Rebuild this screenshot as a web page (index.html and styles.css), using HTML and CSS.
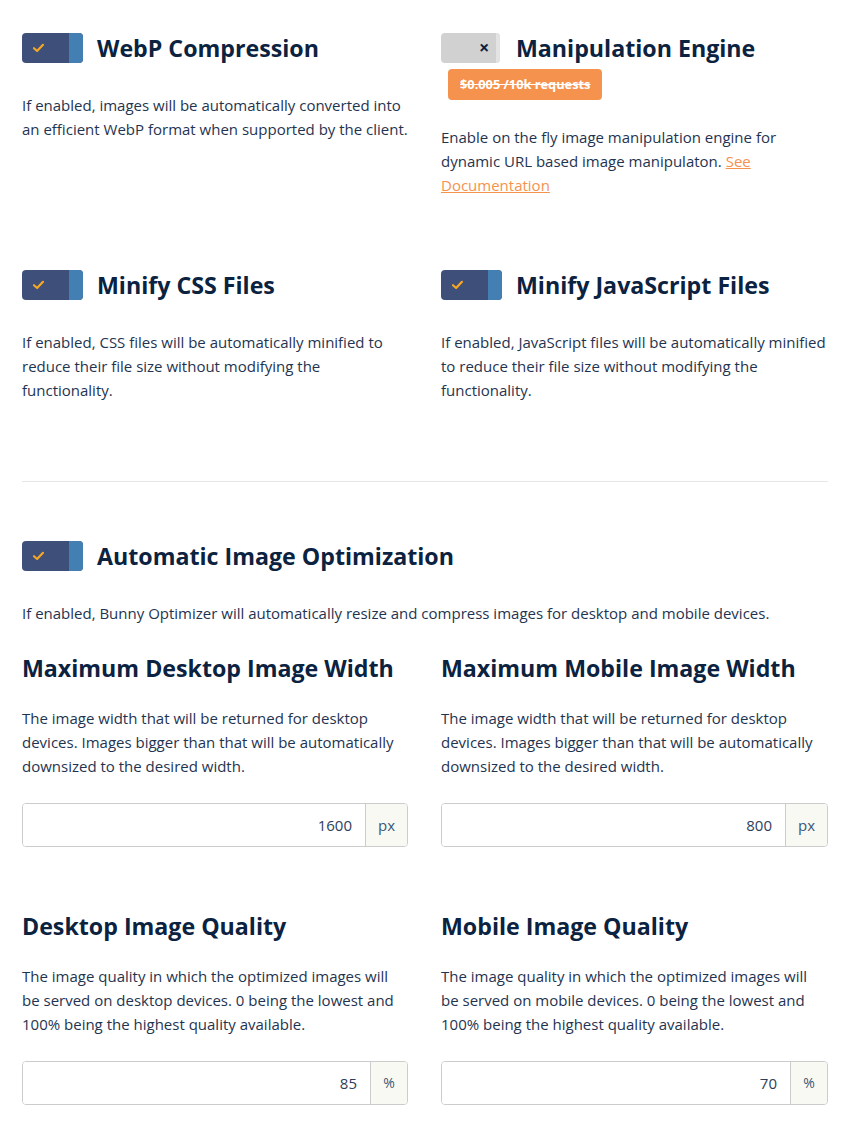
FILE: index.html
```html
<!DOCTYPE html>
<html>
<head>
<meta charset="utf-8">
<link rel="stylesheet" href="styles.css">
</head>
<body>
<div class="page">
  <div class="grid row1">
    <div class="feature">
      <div class="feature-head">
        <span class="toggle on"><svg class="check" viewBox="0 0 12 10" width="13" height="10"><path d="M1.5 5.2 L4.6 8 L10.5 1.8" fill="none" stroke="#f5a623" stroke-width="2.2" stroke-linecap="round" stroke-linejoin="round"/></svg><span class="knob"></span></span>
        <h2 class="feature-title">WebP Compression</h2>
      </div>
      <p class="desc">If enabled, images will be automatically converted into an efficient WebP format when supported by the client.</p>
    </div>
    <div class="feature">
      <div class="feature-head">
        <span class="toggle off"><span class="knob"></span><span class="x">×</span></span>
        <h2 class="feature-title">Manipulation Engine</h2>
      </div>
      <div class="badge"><s>$0.005 /10k requests</s></div>
      <p class="desc after-badge">Enable on the fly image manipulation engine for dynamic URL based image manipulaton. <a href="#" class="link">See Documentation</a></p>
    </div>
  </div>

  <div class="grid row2">
    <div class="feature">
      <div class="feature-head">
        <span class="toggle on"><svg class="check" viewBox="0 0 12 10" width="13" height="10"><path d="M1.5 5.2 L4.6 8 L10.5 1.8" fill="none" stroke="#f5a623" stroke-width="2.2" stroke-linecap="round" stroke-linejoin="round"/></svg><span class="knob"></span></span>
        <h2 class="feature-title">Minify CSS Files</h2>
      </div>
      <p class="desc">If enabled, CSS files will be automatically minified to reduce their file size without modifying the functionality.</p>
    </div>
    <div class="feature">
      <div class="feature-head">
        <span class="toggle on"><svg class="check" viewBox="0 0 12 10" width="13" height="10"><path d="M1.5 5.2 L4.6 8 L10.5 1.8" fill="none" stroke="#f5a623" stroke-width="2.2" stroke-linecap="round" stroke-linejoin="round"/></svg><span class="knob"></span></span>
        <h2 class="feature-title">Minify JavaScript Files</h2>
      </div>
      <p class="desc">If enabled, JavaScript files will be automatically minified to reduce their file size without modifying the functionality.</p>
    </div>
  </div>

  <hr class="divider">

  <div class="feature optimize">
    <div class="feature-head">
      <span class="toggle on"><svg class="check" viewBox="0 0 12 10" width="13" height="10"><path d="M1.5 5.2 L4.6 8 L10.5 1.8" fill="none" stroke="#f5a623" stroke-width="2.2" stroke-linecap="round" stroke-linejoin="round"/></svg><span class="knob"></span></span>
      <h2 class="feature-title">Automatic Image Optimization</h2>
    </div>
    <p class="desc">If enabled, Bunny Optimizer will automatically resize and compress images for desktop and mobile devices.</p>
  </div>

  <div class="grid settings">
    <div class="setting">
      <h3 class="setting-title">Maximum Desktop Image Width</h3>
      <p class="setting-desc">The image width that will be returned for desktop devices. Images bigger than that will be automatically downsized to the desired width.</p>
      <div class="input-group"><div class="input">1600</div><div class="addon addon-px">px</div></div>
    </div>
    <div class="setting">
      <h3 class="setting-title">Maximum Mobile Image Width</h3>
      <p class="setting-desc">The image width that will be returned for desktop devices. Images bigger than that will be automatically downsized to the desired width.</p>
      <div class="input-group"><div class="input">800</div><div class="addon addon-px">px</div></div>
    </div>
    <div class="setting second">
      <h3 class="setting-title">Desktop Image Quality</h3>
      <p class="setting-desc">The image quality in which the optimized images will be served on desktop devices. 0 being the lowest and 100% being the highest quality available.</p>
      <div class="input-group"><div class="input">85</div><div class="addon addon-pct">%</div></div>
    </div>
    <div class="setting second">
      <h3 class="setting-title">Mobile Image Quality</h3>
      <p class="setting-desc">The image quality in which the optimized images will be served on mobile devices. 0 being the lowest and 100% being the highest quality available.</p>
      <div class="input-group"><div class="input">70</div><div class="addon addon-pct">%</div></div>
    </div>
  </div>
</div>
</body>
</html>
```
FILE: styles.css
```css
* { box-sizing: border-box; }
html, body { margin: 0; padding: 0; background: #fff; }
body {
  font-family: "Open Sans", "Noto Sans", sans-serif;
  color: #1f3450;
  font-size: 15px;
  line-height: 24px;
}
.page { padding: 33px 20px 0 22px; }
.grid {
  display: grid;
  grid-template-columns: 386px 387px;
  column-gap: 33px;
}
.row2 { margin-top: 73px; }
.feature-head {
  display: flex;
  align-items: center;
  height: 30px;
}
.toggle {
  position: relative;
  width: 61px;
  height: 30px;
  border-radius: 4px;
  flex: none;
  display: flex;
  align-items: center;
  overflow: hidden;
}
.toggle.on { background: #3e5079; }
.toggle.on .knob {
  position: absolute;
  right: 0; top: 0; bottom: 0;
  width: 14px;
  background: #447fb4;
}
.toggle.on .check { margin-left: 10px; }
.toggle.off { background: #d1d1d1; width: 59px; }
.toggle.off .knob {
  position: absolute;
  right: 0; top: 0; bottom: 0;
  width: 4px;
  background: #e3e3e3;
}
.toggle.off .x {
  position: absolute;
  left: 38px;
  top: 0;
  line-height: 28px;
  font-size: 18px;
  font-weight: 700;
  color: #0d2240;
}
.toggle.off + .feature-title { margin-left: 16px; }
.feature-title {
  margin: 0 0 0 14px;
  font-size: 23.2px;
  font-weight: 700;
  color: #0b2240;
  line-height: 30px;
}
.desc { margin: 30px 0 0 0; }
.badge {
  display: inline-block;
  margin: 6px 0 0 7px;
  background: #f5924e;
  color: #fff;
  font-size: 12.8px;
  font-weight: 700;
  line-height: 31px;
  height: 31px;
  padding: 0 12px;
  border-radius: 4px;
}
.badge s { text-decoration-thickness: 1px; }
.desc.after-badge { margin-top: 25px; }
.link { color: #f5924e; text-decoration: underline; }
.divider {
  margin: 79px 0 0 0;
  border: 0;
  border-top: 1px solid #e6e6e6;
  height: 0;
}
.optimize { margin-top: 59px; }
.optimize .desc { margin-top: 30px; }
.settings { margin-top: 26px; }
.setting-title {
  margin: 0;
  font-size: 23.2px;
  font-weight: 700;
  color: #0b2240;
  line-height: 34px;
}
.setting-desc { margin: 21px 0 0 0; }
.input-group {
  margin-top: 25px;
  display: flex;
  height: 44px;
  border: 1px solid #cccccc;
  border-radius: 4px;
  overflow: hidden;
}
.input {
  flex: 1;
  text-align: right;
  padding: 0 13px;
  line-height: 42px;
  color: #2d3e5c;
  background: #fff;
}
.addon {
  flex: none;
  border-left: 1px solid #cccccc;
  background: #f9f9f4;
  line-height: 42px;
  text-align: center;
  color: #3a5878;
}
.addon-px { width: 42px; }
.addon-pct { width: 37px; font-size: 14px; }
.setting.second { margin-top: 62px; }
```
